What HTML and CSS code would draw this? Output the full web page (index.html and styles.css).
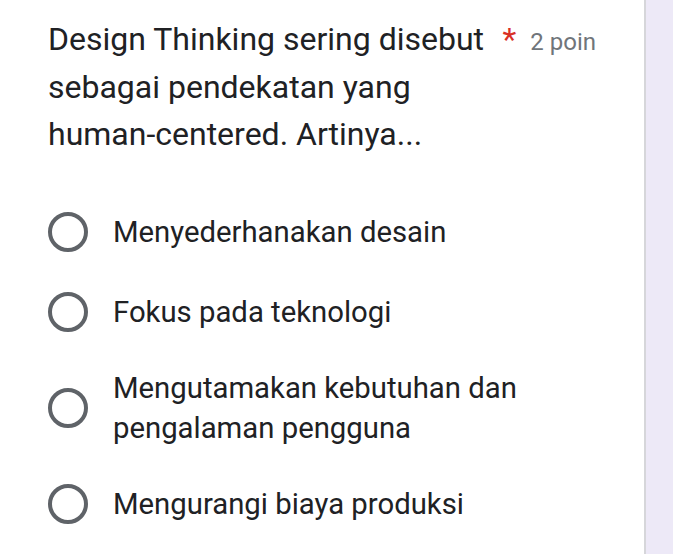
FILE: index.html
```html
<!DOCTYPE html>
<html lang="id">
<head>
<meta charset="utf-8">
<link rel="stylesheet" href="styles.css">
</head>
<body>
<div class="page">
  <main class="card">
    <div class="header">
      <div class="title">Design Thinking sering disebut sebagai pendekatan yang human-centered. Artinya...</div>
      <span class="required">*</span>
      <span class="points">2 poin</span>
    </div>
    <div class="options">
      <label class="option"><span class="radio"></span><span class="label">Menyederhanakan desain</span></label>
      <label class="option"><span class="radio"></span><span class="label">Fokus pada teknologi</span></label>
      <label class="option"><span class="radio"></span><span class="label">Mengutamakan kebutuhan dan pengalaman pengguna</span></label>
      <label class="option"><span class="radio"></span><span class="label">Mengurangi biaya produksi</span></label>
    </div>
  </main>
  <aside class="side"></aside>
</div>
</body>
</html>
```

FILE: styles.css
```css
html, body {
  margin: 0;
  padding: 0;
  background: #ffffff;
}
body {
  font-family: Roboto, "Liberation Sans", sans-serif;
  color: #202124;
}
.page {
  display: flex;
  width: 673px;
  height: 554px;
  overflow: hidden;
}
.card {
  flex: 1;
  background: #ffffff;
  padding: 16px 48px 0 48px;
}
.side {
  width: 27px;
  border-left: 2px solid #d6d6da;
  background: #ede9f7;
}
.header {
  display: flex;
  align-items: baseline;
}
.title {
  flex: 1;
  font-size: 32px;
  line-height: 47.5px;
  color: #202124;
}
.required {
  font-size: 32px;
  line-height: 47.5px;
  color: #d93025;
  margin-right: 14px;
}
.points {
  font-size: 24px;
  color: #70757a;
  white-space: nowrap;
}
.options {
  display: flex;
  flex-direction: column;
  gap: 32px;
  margin-top: 49.5px;
}
.option {
  display: flex;
  align-items: center;
  min-height: 48px;
}
.radio {
  flex: none;
  width: 40px;
  height: 40px;
  box-sizing: border-box;
  border: 4px solid #5f6368;
  border-radius: 50%;
}
.label {
  margin-left: 25px;
  font-size: 29.3px;
  line-height: 40px;
  color: #202124;
}
```
